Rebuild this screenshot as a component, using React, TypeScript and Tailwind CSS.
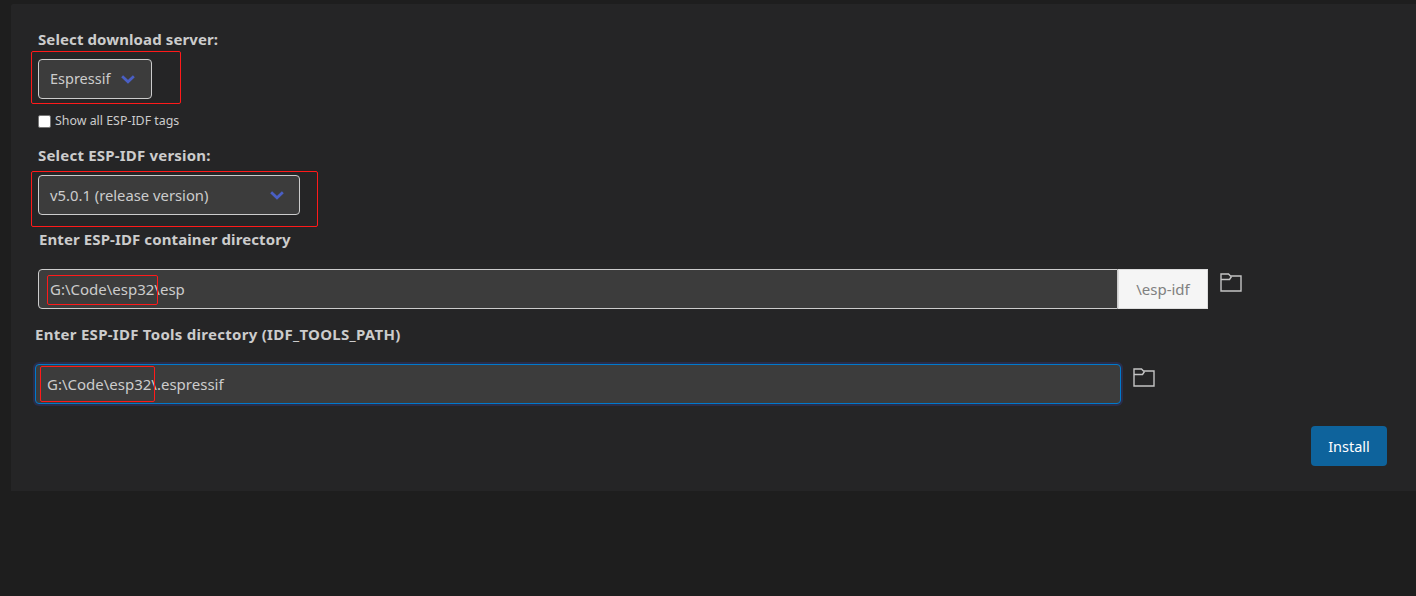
const FONT = "font-['Noto_Sans','Open_Sans',sans-serif]";

const Chevron = () => (
  <svg width="18" height="18" viewBox="0 0 16 16" fill="none" stroke="#4a5fc4" strokeWidth="2.4">
    <path d="M2.8 5.5 8 10.500l5.200-5" />
  </svg>
);

const FolderIcon = () => (
  <svg width="22" height="19" viewBox="0 0 22 19" fill="none" stroke="#c4c4c4" strokeWidth="1.4">
    <path d="M1 1h7.500l2 2h10.500v15h-20z" />
    <path d="M1 6.500h8.500l2-3" />
  </svg>
);

const App = () => {
  return (
    <div className={`w-[1416px] h-[596px] overflow-hidden bg-[#1e1e1e] pt-1 pl-[11px] ${FONT}`}>
      <div className="h-[487px] bg-[#252526] rounded-tl-[2px] pl-[27px] pr-[29px] pt-[25px] text-[#cccccc]">
        {/* Download server */}
        <p className="text-[15px] font-bold leading-5 tracking-[0.1px]">Select download server:</p>
        <div className="relative mt-2.5 w-[114px]">
          <div className="h-10 flex items-center justify-between pl-[11px] pr-[14px] bg-[#3c3c3c] border border-[#cccccc] rounded text-[14.5px]">
            <span>Espressif</span>
            <Chevron />
          </div>
          <div className="absolute -left-[7px] -top-2 w-[150px] h-[53px] border border-[#ff1a1a] rounded-[2px]" />
        </div>
        <label className="mt-[14px] flex items-center gap-1 text-[12.4px] leading-4">
          <span className="w-[13px] h-[13px] bg-white border border-[#767676] rounded-[2px]" />
          Show all ESP-IDF tags
        </label>

        {/* Version */}
        <p className="mt-4 text-[15px] font-bold leading-5 tracking-[0.2px]">Select ESP-IDF version:</p>
        <div className="relative mt-2.5 w-[262px]">
          <div className="h-10 flex items-center justify-between pl-[11px] pr-[13px] bg-[#3c3c3c] border border-[#cccccc] rounded text-[14.8px]">
            <span>v5.0.1 (release version)</span>
            <Chevron />
          </div>
          <div className="absolute -left-[7px] -top-1 w-[287px] h-[56px] border border-[#ff1a1a] rounded-[2px]" />
        </div>

        {/* Container directory */}
        <p className="mt-[15px] ml-px text-[15px] font-bold leading-5 tracking-[0.1px] -translate-y-px">Enter ESP-IDF container directory</p>
        <div className="mt-[19px] flex items-start">
          <div className="relative w-[1170px] h-10 flex">
            <div className="flex-1 flex items-center pl-[11px] bg-[#3c3c3c] border border-[#cccccc] rounded-l text-[15px]">
              G:\Code\esp32\esp
            </div>
            <div className="w-[90px] flex items-center justify-center bg-[#f5f5f5] border border-[#dddddd] text-[#808080] text-[15px]">
              \esp-idf
            </div>
            <div className="absolute left-[9px] top-1.5 w-[111px] h-[30px] border border-[#ff1a1a] rounded-[2px]" />
          </div>
          <div className="ml-3 mt-1">
            <FolderIcon />
          </div>
        </div>

        {/* Tools directory */}
        <div className="-ml-[3px]">
          <p className="mt-[15px] text-[15px] font-bold leading-5 tracking-[0.28px]">Enter ESP-IDF Tools directory (IDF_TOOLS_PATH)</p>
          <div className="mt-5 flex items-start">
            <div className="relative w-[1086px] h-10 flex items-center pl-[11px] bg-[#3c3c3c] border border-[#007acc] rounded-sm shadow-[0_0_0_2px_#2a2d4a] text-[15px]">
              G:\Code\esp32\.espressif
              <div className="absolute left-1 top-px w-[115px] h-9 border border-[#ff1a1a] rounded-[2px]" />
            </div>
            <div className="ml-3 mt-1">
              <FolderIcon />
            </div>
          </div>
        </div>

        <div className="mt-[22px] flex justify-end">
          <button className="w-[76px] h-10 bg-[#0e639c] rounded text-[14.5px] pt-px text-white">Install</button>
        </div>
      </div>
    </div>
  );
};

export default App;
